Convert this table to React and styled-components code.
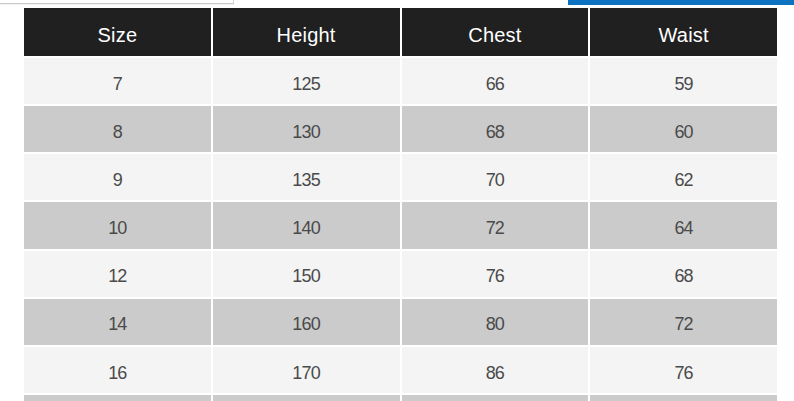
import styled, { createGlobalStyle } from "styled-components";

const GlobalStyle = createGlobalStyle`
  html, body {
    margin: 0;
    padding: 0;
    background: #fff;
    overflow: hidden;
  }
  body {
    font-family: "Liberation Sans", Arial, sans-serif;
  }
`;

const rows = [
  [7, 125, 66, 59],
  [8, 130, 68, 60],
  [9, 135, 70, 62],
  [10, 140, 72, 64],
  [12, 150, 76, 68],
  [14, 160, 80, 72],
  [16, 170, 86, 76],
  [18, 180, 92, 80],
];

const headers = ["Size", "Height", "Chest", "Waist"];

export default function App() {
  return (
    <Page>
      <GlobalStyle />
      <TopBar>
        <SearchField />
        <Spacer />
        <BlueButton />
      </TopBar>
      <SizeTable>
        <thead>
          <tr>
            {headers.map(h => (
              <HeadCell key={h}>{h}</HeadCell>
            ))}
          </tr>
        </thead>
        <tbody>
          {rows.map((row, i) => (
            <tr key={i}>
              {row.map((val, j) => (
                <Cell key={j} $shaded={i % 2 === 1}>{val}</Cell>
              ))}
            </tr>
          ))}
        </tbody>
      </SizeTable>
    </Page>
  );
}

const Page = styled.div`
  width: 794px;
  height: 401px;
  overflow: hidden;
`;

const TopBar = styled.div`
  display: flex;
  align-items: flex-start;
  height: 6px;
`;

const SearchField = styled.div`
  width: 233px;
  height: 3px;
  border-bottom: 1px solid #c9c9c9;
  border-right: 1px solid #d6d6d6;
  box-shadow: 0 1px 1px rgba(0, 0, 0, 0.06);
`;

const Spacer = styled.div`
  flex: 1;
`;

const BlueButton = styled.div`
  width: 226px;
  height: 5px;
  background: #0b72c2;
`;

const SizeTable = styled.table`
  margin-left: 22px;
  border-collapse: separate;
  border-spacing: 2px;
  table-layout: fixed;
  width: 757px;
`;

const HeadCell = styled.th`
  height: 42px;
  padding: 6px 0 0;
  background: #202020;
  color: #fff;
  font-family: "Liberation Sans", Arial, sans-serif;
  font-weight: 400;
  font-size: 20px;
  letter-spacing: 0.2px;
  text-align: center;
  vertical-align: middle;
`;

const Cell = styled.td`
  height: 40.17px;
  padding: 6px 0 0;
  background: ${p => (p.$shaded ? "#cbcbcb" : "#f4f4f4")};
  color: #4a4a4a;
  font-family: "Liberation Sans", Arial, sans-serif;
  font-size: 18px;
  letter-spacing: -0.8px;
  text-align: center;
  vertical-align: middle;
`;
